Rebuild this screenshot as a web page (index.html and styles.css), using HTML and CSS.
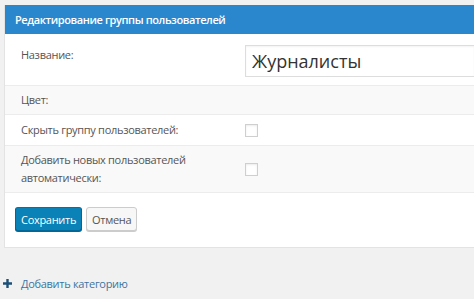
FILE: index.html
```html
<!DOCTYPE html>
<html lang="ru">
  <head>
    <meta charset="UTF-8" />
    <meta name="viewport" content="width=device-width, initial-scale=1.0" />
    <title>Редактирование группы пользователей</title>
    <link rel="stylesheet" href="styles.css">
  </head>
  <body>
    <div class="panel">
      <div class="panel-head">Редактирование группы пользователей</div>
      <div class="row row-name">
        <label class="label" for="name">Название:</label>
        <input class="text-input" id="name" type="text" value="Журналисты" />
      </div>
      <div class="row row-alt">
        <span class="label">Цвет:</span>
      </div>
      <div class="row row-check">
        <label class="label" for="hide">Скрыть группу пользователей:</label>
        <input class="check" id="hide" type="checkbox" />
      </div>
      <div class="row row-alt">
        <label class="label" for="auto">Добавить новых пользователей<br />автоматически:</label>
        <input class="check" id="auto" type="checkbox" />
      </div>
      <div class="actions">
        <button class="btn btn-primary">Сохранить</button>
        <button class="btn">Отмена</button>
      </div>
    </div>
    <div class="footer">
      <a class="add-link" href="#">
        <svg class="plus" width="9" height="9" viewBox="0 0 9 9">
          <path d="M4.5 0v9M0 4.5h9" stroke="#1d4f78" stroke-width="2.4" />
        </svg>
        Добавить категорию
      </a>
    </div>
  </body>
</html>
```

FILE: styles.css
```css
body {
  margin: 0;
  background: #f1f1f1;
  font-family: "Open Sans", Arial, sans-serif;
  font-size: 11px;
  letter-spacing: -0.3px;
  color: #555;
  height: 299px;
  overflow: hidden;
}
.panel {
  margin: 5px 0 0 4px;
  background: #fff;
  border: 1px solid #e3e3e3;
  border-right: none;
  border-top: none;
}
.panel-head {
  background: #2b87cd;
  color: #fff;
  font-weight: 600;
  letter-spacing: -0.4px;
  height: 29px;
  line-height: 29px;
  padding-left: 10px;
}
.row {
  display: grid;
  grid-template-columns: 224px 1fr;
  align-items: center;
  padding: 5px 16px;
  line-height: 18px;
  border-bottom: 1px solid #ececec;
}
.row-alt {
  background: #f9f9f9;
}
.row-check {
  padding: 6px 16px;
}
.row-name {
  align-items: start;
  padding: 11px 0 8px 16px;
}
.row-name .label {
  line-height: 20px;
}
.text-input {
  box-sizing: border-box;
  height: 32px;
  width: 100%;
  border: 1px solid #ddd;
  border-right: none;
  padding: 0 6px;
  font-family: "Open Sans", Arial, sans-serif;
  font-size: 18px;
  letter-spacing: 0;
  color: #333;
  outline: none;
  box-shadow: inset 0 1px 2px rgba(0, 0, 0, 0.05);
}
.check {
  appearance: none;
  margin: 0;
  width: 13px;
  height: 13px;
  border: 1px solid #cfcfcf;
  background: #fff;
  box-shadow: inset 0 1px 2px rgba(0, 0, 0, 0.08);
}
.actions {
  display: flex;
  gap: 4px;
  padding: 14px 10px 16px;
}
.btn {
  height: 24px;
  padding: 0 5px;
  border: 1px solid #ccc;
  border-radius: 3px;
  background: #f7f7f7;
  color: #555;
  font-family: "Open Sans", Arial, sans-serif;
  font-size: 11px;
  letter-spacing: -0.3px;
  box-shadow: 0 1px 0 #ccc;
}
.btn-primary {
  background: #0a82b8;
  border-color: #0073aa #006799 #006799;
  color: #fff;
  padding: 0 5px;
  box-shadow: 0 1px 0 #006799;
}
.footer {
  padding: 28px 0 0 3px;
}
.add-link {
  display: flex;
  align-items: center;
  gap: 9px;
  color: #3a75a3;
  text-decoration: none;
}
```
